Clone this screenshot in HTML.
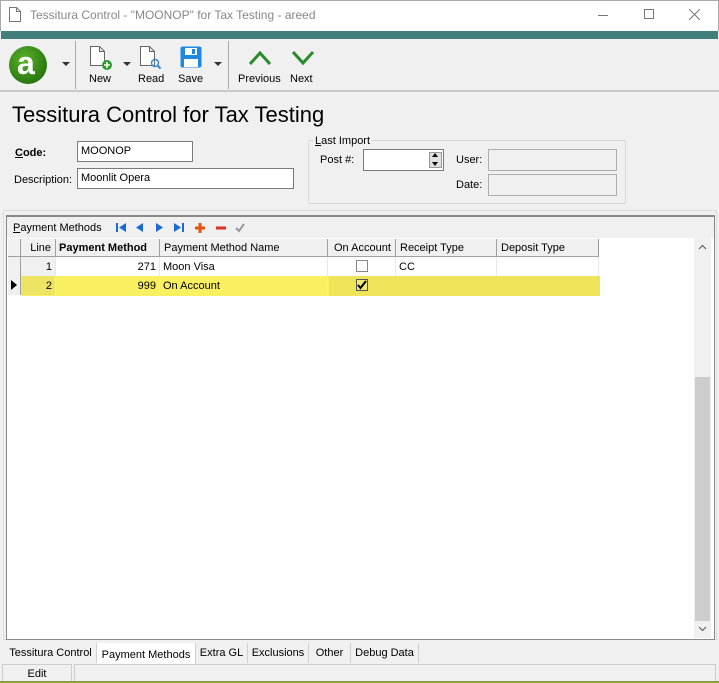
<!DOCTYPE html>
<html><head><style>
*{margin:0;padding:0;box-sizing:border-box}
body{width:719px;height:683px;background:#f0f0f0;font-family:"Liberation Sans",sans-serif;font-size:11px;color:#000;position:relative;overflow:hidden}
.a{position:absolute}
.t{white-space:nowrap}
.inp{position:absolute;background:#fff;border:1px solid #7a7a7a;padding:3px 3px;font-size:11px}
.dis{position:absolute;background:#f0f0f0;border:1px solid #adadad}
.hc{position:absolute;top:239px;height:18px;background:#f0f0f0;border-right:1px solid #a0a0a0;border-bottom:1px solid #a0a0a0;padding:3px 4px 0;font-size:11px}
.c{position:absolute;height:19px;padding:4px 3px 0;font-size:11px;border-right:1px solid #e8e8e8}
.tab{position:absolute;top:643px;height:20px;padding:4px 0 0;text-align:center;font-size:11px;border-right:1px solid #d0d0d0}
</style></head><body>
<div class="a" style="left:0;top:0;width:719px;height:31px;background:#fff;border:1px solid #aaa;border-bottom:none"></div>
<svg class="a" style="left:9px;top:7px" width="12" height="15"><path d="M.5 .5h7l4 4v10H.5z M7.5 .5v4h4" fill="#fff" stroke="#777"/></svg>
<div class="a t" style="left:30px;top:8px;font-size:12px;color:#888">Tessitura Control - "MOONOP" for Tax Testing - areed</div>
<div class="a" style="left:598px;top:15px;width:10px;height:1px;background:#777"></div>
<div class="a" style="left:644px;top:9px;width:10px;height:10px;border:1px solid #777"></div>
<svg class="a" style="left:689px;top:9px" width="11" height="11"><path d="M0 0L11 11M11 0L0 11" stroke="#777"/></svg>
<div class="a" style="left:1px;top:31px;width:717px;height:8px;background:#417f7d"></div>
<div class="a" style="left:0;top:90px;width:719px;height:2px;background:#c8c8c8"></div>
<div class="a" style="left:9px;top:46px;width:38px;height:38px;border-radius:50%;background:radial-gradient(circle at 40% 35%,#5db02a,#2a7a10 70%,#1d5a08)"></div>
<div class="a t" style="left:17px;top:45px;font-size:32px;font-weight:bold;color:#fff">a</div>
<div class="a" style="left:62px;top:62px;border:4px solid transparent;border-top:4px solid #333"></div>
<div class="a" style="left:75px;top:41px;width:1px;height:48px;background:#aaa"></div>
<svg class="a" style="left:90px;top:46px" width="24" height="26"><path d="M.5 .5h9l5 5v14H.5z M9.5 .5v5h5" fill="#fff" stroke="#666"/><circle cx="17" cy="19" r="5" fill="#2d9a2d"/><path d="M17 16v6M14 19h6" stroke="#fff" stroke-width="1.6"/></svg>
<div class="a t" style="left:89px;top:73px;font-size:11px">New</div>
<div class="a" style="left:123px;top:62px;border:4px solid transparent;border-top:4px solid #333"></div>
<svg class="a" style="left:140px;top:46px" width="24" height="26"><path d="M.5 .5h9l5 5v14H.5z M9.5 .5v5h5" fill="#fff" stroke="#666"/><circle cx="15" cy="17" r="3.5" fill="none" stroke="#3a8ad0" stroke-width="1.5"/><path d="M17.5 19.5l3 3" stroke="#3a8ad0" stroke-width="2"/></svg>
<div class="a t" style="left:138px;top:73px;font-size:11px">Read</div>
<svg class="a" style="left:180px;top:46px" width="22" height="22"><rect x=".5" y=".5" width="21" height="21" rx="2" fill="#1e88e5"/><rect x="5" y="2" width="12" height="7" fill="#fff"/><rect x="12" y="3" width="3" height="5" fill="#1e88e5"/><rect x="4" y="13" width="14" height="8" fill="#fff"/></svg>
<div class="a t" style="left:178px;top:73px;font-size:11px">Save</div>
<div class="a" style="left:214px;top:62px;border:4px solid transparent;border-top:4px solid #333"></div>
<div class="a" style="left:228px;top:41px;width:1px;height:48px;background:#aaa"></div>
<svg class="a" style="left:248px;top:50px" width="24" height="16"><path d="M2 14L12 3l10 11" fill="none" stroke="#2a8a2a" stroke-width="3"/></svg>
<div class="a t" style="left:238px;top:73px;font-size:11px">Previous</div>
<svg class="a" style="left:291px;top:50px" width="24" height="16"><path d="M2 2l10 11L22 2" fill="none" stroke="#2a8a2a" stroke-width="3"/></svg>
<div class="a t" style="left:290px;top:73px;font-size:11px">Next</div>

<div class="a t" style="left:12px;top:102px;font-size:22px">Tessitura Control for Tax Testing</div>
<div class="a t" style="left:15px;top:147px;font-weight:bold"><u>C</u>ode:</div>
<div class="inp" style="left:77px;top:141px;width:116px;height:21px">MOONOP</div>
<div class="a t" style="left:14px;top:174px">Description:</div>
<div class="inp" style="left:77px;top:168px;width:217px;height:21px">Moonlit Opera</div>
<div class="a" style="left:308px;top:140px;width:318px;height:64px;border:1px solid #d8d8d8"></div>
<div class="a t" style="left:313px;top:135px;background:#f0f0f0;padding:0 2px"><u>L</u>ast Import</div>
<div class="a t" style="left:320px;top:154px">Post #:</div>
<div class="inp" style="left:363px;top:149px;width:81px;height:22px"></div>
<div class="a" style="left:429px;top:152px;width:13px;height:16px;background:#e0e0e0;border:1px solid #999"></div>
<div class="a" style="left:432px;top:153px;border:3.5px solid transparent;border-bottom:4px solid #000;border-top:none"></div>
<div class="a" style="left:432px;top:162px;border:3.5px solid transparent;border-top:4px solid #000;border-bottom:none"></div>
<div class="a t" style="left:456px;top:154px">User:</div>
<div class="dis" style="left:488px;top:149px;width:129px;height:22px"></div>
<div class="a t" style="left:456px;top:179px">Date:</div>
<div class="dis" style="left:488px;top:174px;width:129px;height:22px"></div>

<div class="a" style="left:3px;top:210px;width:714px;height:430px;border:1px solid #ddd;background:#f0f0f0"></div>
<div class="a" style="left:6px;top:215px;width:709px;height:425px;border:1px solid #888;border-top:2px solid #888;background:#fff"></div>
<div class="a" style="left:7px;top:217px;width:707px;height:21px;background:#f0f0f0"></div>
<div class="a t" style="left:13px;top:222px"><u>P</u>ayment Methods</div>
<svg class="a" style="left:114px;top:222px" width="135" height="12">
<g fill="#1a6ad0"><rect x="2" y="1" width="2" height="9"/><path d="M12 1v9L5 5.5z"/>
<path d="M146 0" /><path d="M145 0"/>
<path d="M29 1v9l-7-4.5z"/>
<path d="M42 1v9l7-4.5z"/>
<path d="M60 1v9l7-4.5z"/><rect x="68" y="1" width="2" height="9"/></g>
<path d="M86 1v10M81 6h10" stroke="#e85010" stroke-width="3"/>
<rect x="102" y="4.5" width="10" height="3" fill="#e03020"/>
<path d="M122 6l3 3 5-7" fill="none" stroke="#999" stroke-width="2"/>
</svg>
<div class="hc" style="left:8px;width:13px"></div>
<div class="hc" style="left:21px;width:35px;text-align:right">Line</div>
<div class="hc" style="left:56px;width:104px;font-weight:bold;padding-left:3px">Payment Method</div>
<div class="hc" style="left:160px;width:168px">Payment Method Name</div>
<div class="hc" style="left:328px;width:68px;padding-left:6px">On Account</div>
<div class="hc" style="left:396px;width:101px">Receipt Type</div>
<div class="hc" style="left:497px;width:102px">Deposit Type</div>
<div class="a" style="left:8px;top:257px;width:13px;height:38px;background:#f0f0f0;border-right:1px solid #a0a0a0"></div>
<div class="c" style="left:21px;top:257px;width:35px;text-align:right;background:#f0f0f0">1</div>
<div class="c" style="left:56px;top:257px;width:104px;text-align:right">271</div>
<div class="c" style="left:160px;top:257px;width:168px">Moon Visa</div>
<div class="c" style="left:328px;top:257px;width:68px"></div>
<div class="a" style="left:356px;top:260px;width:12px;height:12px;border:1px solid #888;background:#fff"></div>
<div class="c" style="left:396px;top:257px;width:101px">CC</div>
<div class="c" style="left:497px;top:257px;width:102px"></div>
<div class="a" style="left:21px;top:276px;width:579px;height:20px;background:#ede45a"></div>
<div class="a" style="left:21px;top:276px;width:308px;height:20px;background:#f8f060"></div>
<div class="a" style="left:11px;top:280px;border:5px solid transparent;border-left:6px solid #000;border-right:none"></div>
<div class="c" style="left:21px;top:276px;width:35px;text-align:right;background:#ece462">2</div>
<div class="c" style="left:56px;top:276px;width:104px;text-align:right">999</div>
<div class="c" style="left:160px;top:276px;width:168px">On Account</div>
<div class="a" style="left:356px;top:279px;width:12px;height:12px;border:1px solid #555;background:#f0ea70"></div>
<svg class="a" style="left:357px;top:280px" width="10" height="10"><path d="M1 5l2.5 3L9 1" fill="none" stroke="#000" stroke-width="2"/></svg>
<div class="a" style="left:694px;top:238px;width:17px;height:400px;background:#f0f0f0"></div>
<svg class="a" style="left:698px;top:244px" width="9" height="6"><path d="M1 5l3.5-3.5L8 5" fill="none" stroke="#555"/></svg>
<div class="a" style="left:695px;top:377px;width:15px;height:244px;background:#cdcdcd"></div>
<svg class="a" style="left:698px;top:626px" width="9" height="6"><path d="M1 1l3.5 3.5L8 1" fill="none" stroke="#555"/></svg>

<div class="tab" style="left:5px;width:92px">Tessitura Control</div>
<div class="tab" style="left:97px;width:99px;top:643px;height:21px;background:#fff;padding-top:6px">Payment Methods</div>
<div class="tab" style="left:196px;width:52px">Extra GL</div>
<div class="tab" style="left:248px;width:61px">Exclusions</div>
<div class="tab" style="left:309px;width:42px">Other</div>
<div class="tab" style="left:351px;width:68px">Debug Data</div>
<div class="a" style="left:2px;top:664px;width:70px;height:19px;border:1px solid #ccc;text-align:center;padding-top:3px">Edit</div>
<div class="a" style="left:74px;top:664px;width:642px;height:19px;border:1px solid #ccc"></div>
<div class="a" style="left:0;top:681px;width:719px;height:2px;background:#8aa040"></div>
</body></html>
